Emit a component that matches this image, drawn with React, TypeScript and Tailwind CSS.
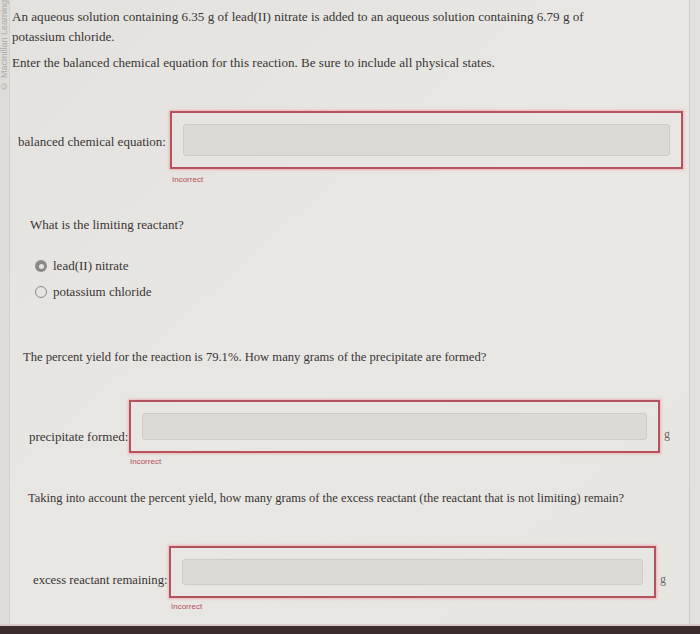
import React from "react";

const serif = { fontFamily: '"Liberation Serif", "Times New Roman", serif' };

type RowProps = {
  label: string;
  labelW: string;
  labelCls: string;
  boxW: string;
  boxH: string;
  unit?: boolean;
};

function AnswerRow({ label, labelW, labelCls, boxW, boxH, unit }: RowProps) {
  return (
    <div className="flex">
      <div className={`${labelW} ${labelCls} whitespace-nowrap leading-5 text-[#383535]`}>{label}</div>
      <div
        className={`${boxW} ${boxH} border-2 border-[#b5525b] p-[11px] shadow-[0_0_2px_1px_rgba(240,160,165,0.7)]`}
      >
        <div className="h-full w-full rounded-[3px] border border-[#cfccc7] bg-[#dcdad5]" />
      </div>
      {unit && <span className="ml-[4px] self-end pb-[9px] text-[12px] leading-5 text-[#6f6c6a]">g</span>}
    </div>
  );
}

function Incorrect({ className }: { className: string }) {
  return (
    <div
      className={`${className} text-[8px] leading-[10px] text-[#b24e56]`}
      style={{ fontFamily: '"Liberation Sans", Arial, sans-serif' }}
    >
      Incorrect
    </div>
  );
}

function Radio({ checked, label }: { checked?: boolean; label: string }) {
  return (
    <div className="flex h-5 items-center">
      {checked ? (
        <span className="ml-[25px] flex h-[12px] w-[12px] items-center justify-center rounded-full bg-[#8c8a88]">
          <span className="h-[5px] w-[5px] rounded-full bg-[#e4e2de]" />
        </span>
      ) : (
        <span className="ml-[25px] h-[12px] w-[12px] rounded-full border-[1.5px] border-[#8c8a88]" />
      )}
      <span className="ml-[6px] text-[13px] text-[#383535]">{label}</span>
    </div>
  );
}

export default function App() {
  return (
    <div className="flex h-[634px] w-[700px] flex-col overflow-hidden bg-linear-to-br from-[#e4e2de] via-[#e9e7e3] to-[#e7e5e1]" style={serif}>
      <div className="flex flex-1">
        {/* publisher strip */}
        <aside className="flex w-[10px] flex-col border-r border-[#d3d1cd] bg-[#dedcd8]">
          <span
            className="rotate-180 whitespace-nowrap pl-[1px] text-[9px] leading-[9px] text-[#aeaca9] [writing-mode:vertical-rl]"
            style={{ fontFamily: '"Liberation Sans", Arial, sans-serif' }}
          >
            © Macmillan Learning
          </span>
        </aside>

        <main className="flex-1 text-[#383535]">
          <p className="ml-[2px] pt-[7px] text-[13.1px] leading-5">
            An aqueous solution containing 6.35 g of lead(II) nitrate is added to an aqueous solution containing 6.79 g of
            <br />
            potassium chloride.
          </p>
          <p className="ml-[2px] mt-[6px] text-[13.1px] leading-5">
            Enter the balanced chemical equation for this reaction. Be sure to include all physical states.
          </p>

          <div className="ml-[8px] mt-[38px]">
            <AnswerRow
              label="balanced chemical equation:"
              labelW="w-[152px]"
              labelCls="self-center pt-[3px] text-[13px]"
              boxW="w-[513px]"
              boxH="h-[58px]"
            />
          </div>
          <Incorrect className="ml-[162px] mt-[6px]" />

          <p className="ml-[20px] mt-[30px] text-[13px] leading-5">What is the limiting reactant?</p>
          <div className="mt-[21px]">
            <Radio checked label="lead(II) nitrate" />
          </div>
          <div className="mt-[6px]">
            <Radio label="potassium chloride" />
          </div>

          <p className="ml-[13px] mt-[45px] text-[12.6px] leading-5">
            The percent yield for the reaction is 79.1%. How many grams of the precipitate are formed?
          </p>
          <div className="ml-[19px] mt-[33px]">
            <AnswerRow
              label="precipitate formed:"
              labelW="w-[100px]"
              labelCls="self-end pb-[6px] text-[13px]"
              boxW="w-[531px]"
              boxH="h-[53px]"
              unit
            />
          </div>
          <Incorrect className="ml-[120px] mt-[4px]" />

          <p className="ml-[18px] mt-[21px] text-[12.5px] leading-5">
            Taking into account the percent yield, how many grams of the excess reactant (the reactant that is not limiting) remain?
          </p>
          <div className="ml-[23px] mt-[38px]">
            <AnswerRow
              label="excess reactant remaining:"
              labelW="w-[136px]"
              labelCls="self-end pb-[8px] text-[12.7px]"
              boxW="w-[487px]"
              boxH="h-[52px]"
              unit
            />
          </div>
          <Incorrect className="ml-[161px] mt-[4px]" />
        </main>

        <div className="w-[11px] border-l border-[#cfcdc9] bg-[#e3e1dd]" />
      </div>
      <div className="h-[2px] bg-[#d9c9c9]" />
      <div className="h-[8px] bg-[#3a2c2d]" />
    </div>
  );
}
